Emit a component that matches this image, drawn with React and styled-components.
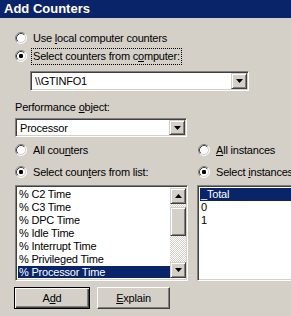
import React from "react";
import styled, { createGlobalStyle } from "styled-components";

const GlobalStyle = createGlobalStyle`
  html, body {
    margin: 0;
    padding: 0;
    background: #d4d0c8;
    overflow: hidden;
  }
`;

const Window = styled.div`
  width: 291px;
  height: 316px;
  overflow: hidden;
  background: #d4d0c8;
  font-family: "Liberation Sans", Arial, sans-serif;
  font-size: 11px;
  letter-spacing: -0.2px;
  color: #000;
`;

const TitleBar = styled.div`
  height: 18px;
  line-height: 17px;
  padding-left: 4px;
  background: #0a246a;
  color: #fff;
  font-weight: bold;
  font-size: 13px;
  letter-spacing: 0;
  white-space: nowrap;
`;

const Content = styled.div`
  display: flex;
  flex-direction: column;
  padding: 11px 0 0 15px;
`;

const RadioRow = styled.div`
  display: flex;
  align-items: center;
  height: 18px;
  gap: 5px;
  white-space: nowrap;
  margin-left: ${(p) => p.$indent || 0}px;
  margin-top: ${(p) => p.$top || 0}px;
`;

const Caption = styled.span`
  padding: 1px 1px;
  line-height: 13px;
  outline: ${(p) => (p.$focus ? "1px dotted #000" : "none")};
  outline-offset: 0;
`;

const Key = styled.span`
  text-decoration: underline;
`;

const Field = styled.div`
  box-sizing: border-box;
  display: flex;
  align-items: center;
  width: ${(p) => p.$w}px;
  height: ${(p) => p.$h}px;
  margin-left: ${(p) => p.$indent || 0}px;
  margin-top: ${(p) => p.$top || 0}px;
  background: #fff;
  border: 1px solid;
  border-color: #808080 #fff #fff #808080;
  box-shadow: inset 1px 1px 0 #404040, inset -1px -1px 0 #d4d0c8;
`;

const FieldText = styled.div`
  flex: 1;
  padding-left: 4px;
  white-space: nowrap;
  overflow: hidden;
`;

const ArrowButton = styled.div`
  box-sizing: border-box;
  display: flex;
  align-items: center;
  justify-content: center;
  width: 16px;
  height: ${(p) => p.$h || 16}px;
  margin-right: 1px;
  flex-shrink: 0;
  background: #d4d0c8;
  border: 1px solid;
  border-color: #d4d0c8 #404040 #404040 #d4d0c8;
  box-shadow: inset 1px 1px 0 #fff, inset -1px -1px 0 #808080;
`;

const Label = styled.div`
  margin-top: 9px;
  line-height: 14px;
  white-space: nowrap;
`;

const Columns = styled.div`
  display: flex;
  gap: 9px;
  margin-top: 4px;
`;

const Column = styled.div`
  display: flex;
  flex-direction: column;
  gap: 4px;
  width: ${(p) => p.$w}px;
  flex-shrink: 0;
`;

const ListBox = styled.div`
  box-sizing: border-box;
  display: flex;
  width: ${(p) => p.$w}px;
  height: 96px;
  background: #fff;
  border: 1px solid;
  border-color: #808080 #fff #fff #808080;
  box-shadow: inset 1px 1px 0 #404040, inset -1px -1px 0 #d4d0c8;
  padding: 2px 0 2px 2px;
`;

const Items = styled.div`
  flex: 1;
  display: flex;
  flex-direction: column;
  overflow: hidden;
`;

const Item = styled.div`
  height: 13px;
  line-height: 13px;
  padding-left: 1px;
  white-space: nowrap;
  background: ${(p) => (p.$selected ? "#0a246a" : "transparent")};
  color: ${(p) => (p.$selected ? "#fff" : "#000")};
`;

const ScrollBar = styled.div`
  display: flex;
  flex-direction: column;
  width: 16px;
  margin-right: 1px;
`;

const Track = styled.div`
  flex: 1;
  display: flex;
  flex-direction: column;
  background-color: #fff;
  background-image: repeating-conic-gradient(#d4d0c8 0 25%, #fff 0 50%);
  background-size: 2px 2px;
`;

const Thumb = styled.div`
  box-sizing: border-box;
  height: 29px;
  margin-top: 3px;
  background: #d4d0c8;
  border: 1px solid;
  border-color: #d4d0c8 #404040 #404040 #d4d0c8;
  box-shadow: inset 1px 1px 0 #fff, inset -1px -1px 0 #808080;
`;

const ButtonRow = styled.div`
  display: flex;
  gap: 7px;
  margin-top: 6px;
  margin-left: -1px;
`;

const Button = styled.div`
  box-sizing: border-box;
  display: flex;
  align-items: center;
  justify-content: center;
  width: ${(p) => p.$w}px;
  height: 22px;
  background: #d4d0c8;
  border: 1px solid;
  border-color: ${(p) =>
    p.$default ? "#000" : "#fff #404040 #404040 #fff"};
  box-shadow: ${(p) =>
    p.$default
      ? "inset 1px 1px 0 #fff, inset -1px -1px 0 #404040, inset -2px -2px 0 #808080"
      : "inset -1px -1px 0 #808080"};
`;

const Radio = ({ checked }) => (
  <svg width="12" height="12" viewBox="0 0 12 12" style={{ flexShrink: 0 }}>
    <circle cx="6" cy="6" r="5" fill="#fff" />
    <path d="M2.11 9.89 A5.5 5.5 0 0 1 9.89 2.11" fill="none" stroke="#808080" />
    <path d="M9.89 2.11 A5.5 5.5 0 0 1 2.11 9.89" fill="none" stroke="#fff" />
    <path d="M2.82 9.18 A4.5 4.5 0 0 1 9.18 2.82" fill="none" stroke="#404040" />
    <path d="M9.18 2.82 A4.5 4.5 0 0 1 2.82 9.18" fill="none" stroke="#d4d0c8" />
    {checked && <rect x="4" y="4" width="4" height="4" rx="1.2" fill="#000" />}
  </svg>
);

const Arrow = ({ up }) => (
  <svg width="7" height="4" viewBox="0 0 7 4">
    <path d={up ? "M3.5 0 L7 4 L0 4 Z" : "M0 0 L7 0 L3.5 4 Z"} fill="#000" />
  </svg>
);

const counters = [
  "% C2 Time",
  "% C3 Time",
  "% DPC Time",
  "% Idle Time",
  "% Interrupt Time",
  "% Privileged Time",
  "% Processor Time",
];

const instances = ["_Total", "0", "1"];

export default function App() {
  return (
    <Window>
      <GlobalStyle />
      <TitleBar>Add Counters</TitleBar>
      <Content>
        <RadioRow>
          <Radio />
          <Caption>
            Use <Key>l</Key>ocal computer counters
          </Caption>
        </RadioRow>
        <RadioRow>
          <Radio checked />
          <Caption $focus>
            Select counters from c<Key>o</Key>mputer:
          </Caption>
        </RadioRow>
        <Field $w={219} $h={20} $indent={15} $top={6}>
          <FieldText>\\GTINFO1</FieldText>
          <ArrowButton>
            <Arrow />
          </ArrowButton>
        </Field>
        <Label>
          Performance <Key>o</Key>bject:
        </Label>
        <Field $w={172} $h={19} $top={4}>
          <FieldText>Processor</FieldText>
          <ArrowButton $h={15}>
            <Arrow />
          </ArrowButton>
        </Field>
        <Columns>
          <Column $w={173}>
            <RadioRow>
              <Radio />
              <Caption>
                All cou<Key>n</Key>ters
              </Caption>
            </RadioRow>
            <RadioRow>
              <Radio checked />
              <Caption>
                Select coun<Key>t</Key>ers from list:
              </Caption>
            </RadioRow>
            <ListBox $w={173}>
              <Items>
                {counters.map((c, i) => (
                  <Item key={c} $selected={i === counters.length - 1}>
                    {c}
                  </Item>
                ))}
              </Items>
              <ScrollBar>
                <ArrowButton>
                  <Arrow up />
                </ArrowButton>
                <Track>
                  <Thumb />
                </Track>
                <ArrowButton>
                  <Arrow />
                </ArrowButton>
              </ScrollBar>
            </ListBox>
          </Column>
          <Column $w={110}>
            <RadioRow $indent={1}>
              <Radio />
              <Caption>
                <Key>A</Key>ll instances
              </Caption>
            </RadioRow>
            <RadioRow $indent={1}>
              <Radio checked />
              <Caption>
                Select <Key>i</Key>nstances from list:
              </Caption>
            </RadioRow>
            <ListBox $w={110}>
              <Items>
                {instances.map((c, i) => (
                  <Item key={c} $selected={i === 0}>
                    {c}
                  </Item>
                ))}
              </Items>
            </ListBox>
          </Column>
        </Columns>
        <ButtonRow>
          <Button $w={76} $default>
            <span>
              A<Key>d</Key>d
            </span>
          </Button>
          <Button $w={73}>
            <span>
              <Key>E</Key>xplain
            </span>
          </Button>
        </ButtonRow>
      </Content>
    </Window>
  );
}
